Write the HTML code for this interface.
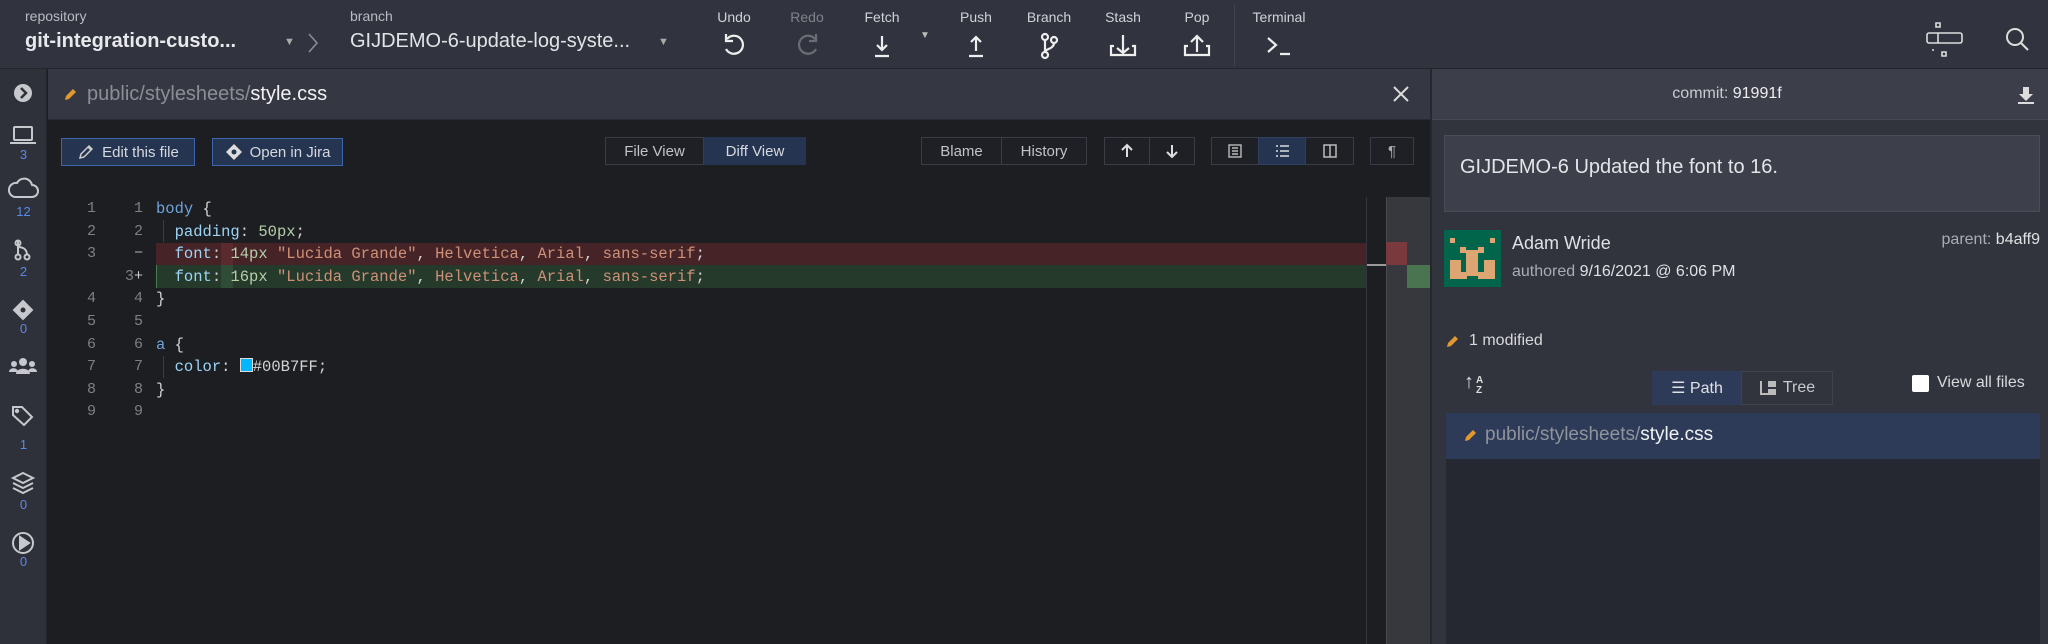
<!DOCTYPE html>
<html><head><meta charset="utf-8"><style>
*{box-sizing:border-box;margin:0;padding:0}
body{width:2048px;height:644px;overflow:hidden;background:#1d1e22;font-family:"Liberation Sans",sans-serif;color:#c8cad0;position:relative}
.a{position:absolute;white-space:nowrap}
.hdr{left:0;top:0;width:2048px;height:69px;background:#31343e;border-bottom:1px solid #23252b}
.lbl{font-size:14px;color:#b8bbc2}
.tb{font-size:14px;color:#d0d2d8;text-align:center;width:70px}
.side{left:0;top:69px;width:47px;height:575px;background:#2e3139;border-right:1px solid #25272d}
.num{font-size:13px;color:#5a8ae8;width:47px;text-align:center}
.btn{height:28px;border:1px solid #3a3d47;background:#1f2026;font-size:15px;color:#c0c3ca;display:flex;align-items:center;justify-content:center}
.code{font-family:"Liberation Mono",monospace;font-size:15.5px;line-height:22.6px}
.ln{color:#7d8087;font-family:"Liberation Mono",monospace;font-size:15px}
.k{color:#6fa3dc}.p{color:#9cd4f5}.n{color:#b5cea8}.s{color:#ce9178}.w{color:#d4d4d4}
</style></head><body>
<div class="a" style="left:0;top:0;width:2048px;height:3px;background:#26282e"></div>
<div class="a hdr"></div>
<div class="a lbl" style="left:25px;top:8px">repository</div>
<div class="a" style="left:25px;top:30px;font-size:20px;font-weight:bold;color:#e8e9ec">git-integration-custo...</div>
<div class="a" style="left:284px;top:36px;font-size:11px;color:#aaa">▼</div>
<svg class="a" style="left:306px;top:32px" width="14" height="22"><path d="M3 2l8 9-8 9" stroke="#8a8d94" stroke-width="1.6" fill="none"/></svg>
<div class="a lbl" style="left:350px;top:8px">branch</div>
<div class="a" style="left:350px;top:30px;font-size:20px;color:#e2e3e6">GIJDEMO-6-update-log-syste...</div>
<div class="a" style="left:658px;top:36px;font-size:11px;color:#aaa">▼</div>
<div class="a tb" style="left:699px;top:9px">Undo</div>
<div class="a tb" style="left:772px;top:9px;color:#80838a">Redo</div>
<div class="a tb" style="left:847px;top:9px">Fetch</div>
<div class="a" style="left:920px;top:30px;font-size:10px;color:#bbb">▼</div>
<div class="a tb" style="left:941px;top:9px">Push</div>
<div class="a tb" style="left:1014px;top:9px">Branch</div>
<div class="a tb" style="left:1088px;top:9px">Stash</div>
<div class="a tb" style="left:1162px;top:9px">Pop</div>
<div class="a" style="left:1234px;top:4px;width:1px;height:62px;background:#40434c"></div>
<div class="a tb" style="left:1244px;top:9px">Terminal</div>
<svg class="a" style="left:0;top:0" width="1400" height="69" fill="none" stroke="#eee" stroke-width="2.2">
<path d="M727 39a9 9 0 1 1 -1 10M726 34v7h7"/>
<path d="M815 39a9 9 0 1 0 1 10M816 34v7h-7" stroke="#6a6d74"/>
<path d="M882 36v14M877 45l5 5 5-5M875 56h14"/>
<path d="M976 51v-14M971 42l5-5 5 5M969 56h14"/>
<circle cx="1045" cy="37" r="3"/><circle cx="1045" cy="55" r="3"/><circle cx="1054" cy="40" r="3"/><path d="M1045 40v12M1054 43c0 6-9 6-9 9"/>
<path d="M1114 46h-3v9h24v-9h-3M1117 48l6 5 6-5M1123 35v18"/>
<path d="M1188 46h-3v9h24v-9h-3M1191 42l6-6 6 6M1197 36v16"/>
<path d="M1268 38l8 7-8 7M1280 54h10"/>
</svg>
<svg class="a" style="left:1920px;top:20px" width="50" height="40" fill="none" stroke="#ddd" stroke-width="1.6"><rect x="7" y="13" width="35" height="10" rx="2"/><path d="M18 13v10M16 3h4v4h-4zM22 32h4v4h-4zM12 30h2"/></svg>
<svg class="a" style="left:2004px;top:26px" width="28" height="28" fill="none" stroke="#ddd" stroke-width="2"><circle cx="11" cy="11" r="8"/><path d="M17 17l7 7"/></svg>

<div class="a side"></div>
<svg class="a" style="left:0;top:69px" width="47" height="520" fill="none" stroke="#c6c8cd" stroke-width="2">
<circle cx="23" cy="24" r="9" fill="#c6c8cd" stroke="none"/><path d="M21 19l5 5-5 5" stroke="#2e3139" stroke-width="2.5"/>
<rect x="14" y="58" width="18" height="13" rx="1"/><path d="M10 74h26"/>
<path d="M15 128h17a6 6 0 0 0 0-12a8 8 0 0 0-15-2a7 7 0 0 0-2 14z"/>
<circle cx="18" cy="174" r="2.5"/><circle cx="18" cy="188" r="2.5"/><circle cx="27" cy="188" r="2.5"/><path d="M18 171v14M18 178c7 0 9 4 9 8"/>
<path d="M23 232l9 9-9 9-9-9z" fill="#c6c8cd"/><circle cx="23" cy="241" r="2.5" fill="#2e3139" stroke="none"/>
<circle cx="23" cy="293" r="4" fill="#c6c8cd" stroke="none"/><circle cx="14" cy="295" r="3" fill="#c6c8cd" stroke="none"/><circle cx="32" cy="295" r="3" fill="#c6c8cd" stroke="none"/><path d="M16 305c0-7 14-7 14 0zM9 303c0-5 9-5 9 0M28 303c0-5 9-5 9 0" fill="#c6c8cd" stroke="none"/>
<path d="M13 346v-8h9l10 10-8 8z"/><circle cx="17" cy="342" r="1.2" fill="#c6c8cd"/>
<path d="M23 404l10 5-10 5-10-5zM13 414l10 5 10-5M13 419l10 5 10-5"/>
<circle cx="23" cy="474" r="10"/><path d="M20 468v12l9-6z" fill="#c6c8cd"/>
</svg>
<div class="a num" style="top:147px">3</div>
<div class="a num" style="top:204px">12</div>
<div class="a num" style="top:264px">2</div>
<div class="a num" style="top:321px">0</div>
<div class="a num" style="top:437px">1</div>
<div class="a num" style="top:497px">0</div>
<div class="a num" style="top:554px">0</div>

<div class="a" style="left:48px;top:69px;width:1382px;height:51px;background:#353842;border-bottom:1px solid #2a2c33"></div>
<svg class="a" style="left:62px;top:87px" width="16" height="16"><path d="M3 13l1-4 7-7 3 3-7 7z" fill="#e0982f"/></svg>
<div class="a" style="left:87px;top:83px;font-size:20px;color:#8b8e95">public/stylesheets/<span style="color:#f2f2f4">style.css</span></div>
<svg class="a" style="left:1392px;top:85px" width="18" height="18" stroke="#ddd" stroke-width="2"><path d="M2 2l14 14M16 2L2 16"/></svg>

<div class="a btn" style="left:61px;top:138px;width:134px;background:#253450;border-color:#3d66ad;color:#d6d9e0">
<svg width="18" height="18" fill="none" stroke="#ccc" stroke-width="1.5" style="margin-right:7px"><path d="M3 15l1-4 8-8 3 3-8 8zM11 4l3 3"/></svg>Edit this file</div>
<div class="a btn" style="left:212px;top:138px;width:131px;background:#253450;border-color:#3d66ad;color:#d6d9e0">
<svg width="18" height="18" style="margin-right:7px"><path d="M9 1l8 8-8 8-8-8z" fill="#ddd"/><circle cx="9" cy="9" r="2.5" fill="#253450"/></svg>Open in Jira</div>
<div class="a btn" style="left:605px;top:137px;width:99px">File View</div>
<div class="a btn" style="left:704px;top:137px;width:102px;background:#253450;border-color:#253450;color:#d6d9e0">Diff View</div>
<div class="a btn" style="left:921px;top:137px;width:81px">Blame</div>
<div class="a btn" style="left:1001px;top:137px;width:86px">History</div>
<div class="a btn" style="left:1104px;top:137px;width:46px"><svg width="16" height="16" stroke="#ddd" stroke-width="2" fill="none"><path d="M8 14V2M3 7l5-5 5 5"/></svg></div>
<div class="a btn" style="left:1149px;top:137px;width:46px"><svg width="16" height="16" stroke="#ddd" stroke-width="2" fill="none"><path d="M8 2v12M3 9l5 5 5-5"/></svg></div>
<div class="a btn" style="left:1211px;top:137px;width:48px"><svg width="16" height="16" stroke="#bbb" stroke-width="1.4" fill="none"><rect x="2" y="2" width="12" height="12"/><path d="M5 5h6M5 8h6M5 11h6"/></svg></div>
<div class="a btn" style="left:1258px;top:137px;width:48px;background:#253450;border-color:#2f3f5e"><svg width="16" height="16" stroke="#ddd" stroke-width="1.6" fill="none"><path d="M2 3h2M6 3h9M2 8h2M6 8h9M2 13h2M6 13h9"/></svg></div>
<div class="a btn" style="left:1305px;top:137px;width:49px"><svg width="16" height="16" stroke="#bbb" stroke-width="1.5" fill="none"><rect x="2" y="2" width="12" height="12"/><path d="M8 2v12"/></svg></div>
<div class="a btn" style="left:1370px;top:137px;width:44px;color:#aaa">¶</div>

<div class="a" style="left:156px;top:243px;width:1211px;height:22px;background:#462327"></div>
<div class="a" style="left:156px;top:265px;width:1211px;height:23px;background:#253a2b"></div>
<div class="a" style="left:156px;top:265px;width:1px;height:23px;background:#4a7a52"></div>
<div class="a" style="left:221px;top:243px;width:12px;height:22px;background:#5b2a2e"></div>
<div class="a" style="left:221px;top:265px;width:12px;height:23px;background:#2f4d36"></div>
<div class="a" style="left:163px;top:220px;width:1px;height:22px;background:#3a3c42"></div>
<div class="a" style="left:163px;top:356px;width:1px;height:22px;background:#3a3c42"></div>
<div class="a" style="left:1366px;top:197px;width:1px;height:447px;background:#34363c"></div>
<div class="a" style="left:1386px;top:197px;width:44px;height:447px;background:#37383d;border-left:1px solid #4a4b50"></div>
<div class="a" style="left:1386px;top:242px;width:21px;height:23px;background:#7a3a3d"></div>
<div class="a" style="left:1407px;top:265px;width:23px;height:23px;background:#4a7450"></div>
<div class="a" style="left:1367px;top:264px;width:19px;height:2px;background:#999"></div>

<div class="a ln" style="left:84px;top:198px;line-height:22.6px;text-align:right;width:12px">1<br>2<br>3<br>&nbsp;<br>4<br>5<br>6<br>7<br>8<br>9</div>
<div class="a ln" style="left:118px;top:198px;line-height:22.6px;text-align:right;width:25px">1<br>2<br><span style="color:#aaa">−</span><br>3<span style="color:#ccc">+</span><br>4<br>5<br>6<br>7<br>8<br>9</div>
<div class="a code w" style="left:156px;top:198px">
<span class="k">body</span> {<br>
&nbsp;&nbsp;<span class="p">padding</span>: <span class="n">50px</span>;<br>
&nbsp;&nbsp;<span class="p">font</span>: <span class="n">14px</span> <span class="s">"Lucida Grande"</span>, <span class="s">Helvetica</span>, <span class="s">Arial</span>, <span class="s">sans-serif</span>;<br>
&nbsp;&nbsp;<span class="p">font</span>: <span class="n">16px</span> <span class="s">"Lucida Grande"</span>, <span class="s">Helvetica</span>, <span class="s">Arial</span>, <span class="s">sans-serif</span>;<br>
}<br><br>
<span class="k">a</span> {<br>
&nbsp;&nbsp;<span class="p">color</span>: <span style="display:inline-block;width:13px;height:14px;background:#00b7ff;border:1px solid #ddd;vertical-align:-1px"></span>#00B7FF;<br>
}</div>

<div class="a" style="left:1430px;top:69px;width:618px;height:575px;background:#31343d;border-left:2px solid #26282e"></div>
<div class="a" style="left:1432px;top:69px;width:616px;height:51px;background:#3c3f4a;border-bottom:1px solid #464955"></div>
<div class="a" style="left:1432px;top:85px;width:590px;text-align:center;font-size:16px;color:#c8cad0">commit: <span style="color:#eee">91991f</span></div>
<svg class="a" style="left:2016px;top:86px" width="20" height="20" fill="#ddd"><path d="M7 1h6v7h4l-7 7-7-7h4z"/><rect x="2" y="16" width="16" height="2"/></svg>
<div class="a" style="left:1444px;top:135px;width:596px;height:77px;background:#3d404b;border:1px solid #4a4d58"></div>
<div class="a" style="left:1460px;top:156px;font-size:20px;color:#e4e5e8">GIJDEMO-6 Updated the font to 16.</div>
<svg class="a" style="left:1444px;top:230px" width="57" height="57"><rect width="57" height="57" fill="#00654a"/><g fill="#dca572"><rect x="6" y="8" width="5" height="5"/><rect x="46" y="8" width="5" height="5"/><rect x="16" y="17" width="6" height="6"/><rect x="34" y="17" width="6" height="6"/><rect x="22" y="20" width="12" height="26"/><rect x="6" y="30" width="11" height="19"/><rect x="40" y="30" width="11" height="19"/><rect x="17" y="42" width="6" height="7"/><rect x="34" y="42" width="6" height="7"/></g><rect x="17" y="30" width="5" height="12" fill="#00654a"/><rect x="34" y="30" width="6" height="12" fill="#00654a"/></svg>
<div class="a" style="left:1512px;top:233px;font-size:18px;color:#e0e1e4">Adam Wride</div>
<div class="a" style="left:1512px;top:263px;font-size:16px;color:#a9acb3">authored <span style="color:#e0e1e4">9/16/2021 @ 6:06 PM</span></div>
<div class="a" style="left:1900px;top:231px;width:140px;text-align:right;font-size:16px;color:#a9acb3">parent: <span style="color:#e0e1e4">b4aff9</span></div>
<svg class="a" style="left:1444px;top:334px" width="16" height="16"><path d="M3 13l1-4 7-7 3 3-7 7z" fill="#e0982f"/></svg>
<div class="a" style="left:1469px;top:332px;font-size:16px;color:#d8d9dc">1 modified</div>
<div class="a" style="left:1464px;top:377px;font-size:12px;color:#ddd;line-height:10px"><span style="font-size:20px">↑</span></div>
<div class="a" style="left:1476px;top:376px;font-size:10px;font-weight:bold;color:#ddd;line-height:10px">A<br>Z</div>
<div class="a" style="left:1652px;top:371px;width:90px;height:34px;background:#2d3b58;font-size:16px;color:#e0e1e4;display:flex;align-items:center;justify-content:center">☰&nbsp;Path</div>
<div class="a" style="left:1741px;top:371px;width:92px;height:34px;border:1px solid #40434c;font-size:16px;color:#c8cad0;display:flex;align-items:center;justify-content:center"><svg width="18" height="16" fill="#bbb" style="margin-right:6px"><path d="M1 1h2v12h6v2H1z"/><rect x="9" y="1" width="8" height="6"/><rect x="9" y="9" width="8" height="6"/></svg>Tree</div>
<div class="a" style="left:1912px;top:375px;width:17px;height:17px;background:#fff;border-radius:2px"></div>
<div class="a" style="left:1937px;top:374px;font-size:16px;color:#d8d9dc">View all files</div>
<div class="a" style="left:1446px;top:413px;width:594px;height:231px;background:#262831"></div>
<div class="a" style="left:1446px;top:413px;width:594px;height:46px;background:#2d3b58"></div>
<svg class="a" style="left:1462px;top:428px" width="16" height="16"><path d="M3 13l1-4 7-7 3 3-7 7z" fill="#e0982f"/></svg>
<div class="a" style="left:1485px;top:424px;font-size:19px;color:#8f939c">public/stylesheets/<span style="color:#f0f1f3">style.css</span></div>
</body></html>
